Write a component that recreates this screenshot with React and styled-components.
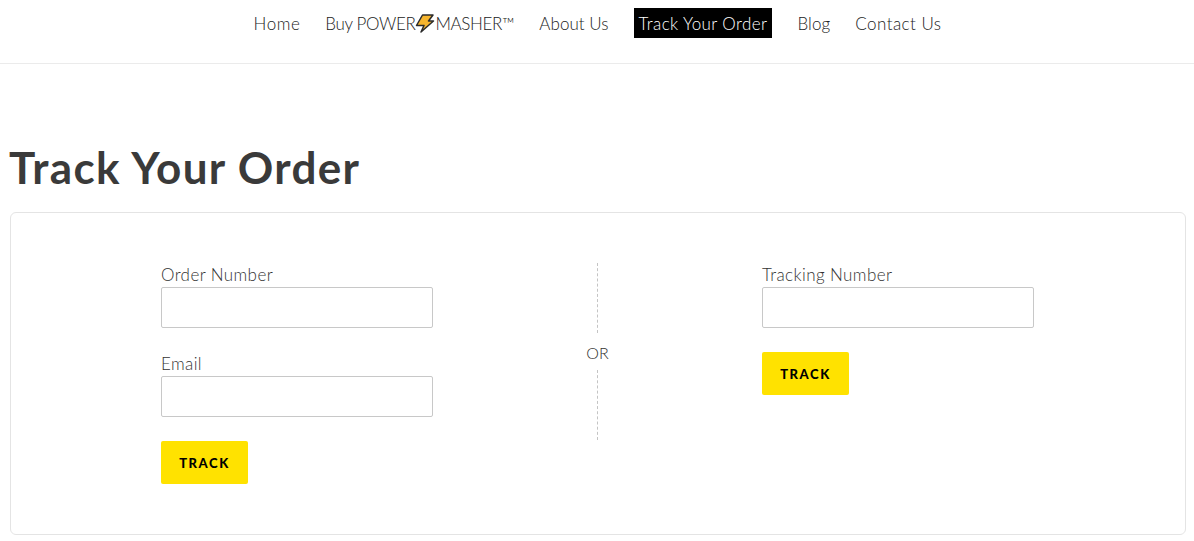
import React from "react";
import styled, { createGlobalStyle } from "styled-components";

const GlobalStyle = createGlobalStyle`
  html, body {
    margin: 0;
    padding: 0;
    background: #fff;
    font-family: "Lato", "Liberation Sans", sans-serif;
    color: #3a3a3a;
  }
  * {
    box-sizing: border-box;
  }
`;

const navItems = [
  { label: "Home", spacing: 0.55 },
  { label: "Buy", spacing: -0.35 },
  { label: "About Us", spacing: 0.05 },
  { label: "Track Your Order", spacing: 0.4, active: true },
  { label: "Blog", spacing: 0.1 },
  { label: "Contact Us", spacing: 0.45 },
];

const Bolt = () => (
  <BoltIcon viewBox="0 0 20 20" aria-hidden="true">
    <path
      d="M7.5 2 H18 L13.5 8 H18.5 L6 19 L9 12.5 H1.5 Z"
      fill="#f6b52e"
      stroke="#2b2b2b"
      strokeWidth="1.5"
      strokeLinejoin="round"
    />
  </BoltIcon>
);

const App = () => {
  return (
    <>
      <GlobalStyle />
      <Header>
        <Nav>
          {navItems.map((item) => (
            <NavLink key={item.label} $active={item.active} $spacing={item.spacing}>
              {item.label === "Buy" ? (
                <>
                  Buy POWER
                  <Bolt />
                  MASHER™
                </>
              ) : (
                item.label
              )}
            </NavLink>
          ))}
        </Nav>
      </Header>
      <Main>
        <Title>Track Your Order</Title>
        <Card>
          <Column>
            <Field>
              <Label>Order Number</Label>
              <Input type="text" />
            </Field>
            <Field>
              <Label>Email</Label>
              <Input type="text" />
            </Field>
            <TrackButton>TRACK</TrackButton>
          </Column>
          <Divider>
            <DashLine />
            <OrText>OR</OrText>
            <DashLine />
          </Divider>
          <Column>
            <Field>
              <Label>Tracking Number</Label>
              <Input type="text" />
            </Field>
            <TrackButton>TRACK</TrackButton>
          </Column>
        </Card>
      </Main>
    </>
  );
};

const Header = styled.header`
  height: 64px;
  border-bottom: 1px solid #ebebeb;
  padding-top: 8px;
`;

const Nav = styled.nav`
  display: flex;
  justify-content: center;
  gap: 25px;
  padding-left: 1px;
`;

const NavLink = styled.a`
  display: flex;
  align-items: center;
  height: 30px;
  padding: 0 ${(p) => (p.$active ? "5px" : "0")};
  font-size: 17px;
  font-weight: 300;
  letter-spacing: ${(p) => p.$spacing}px;
  white-space: nowrap;
  color: ${(p) => (p.$active ? "#fff" : "#222")};
  background: ${(p) => (p.$active ? "#000" : "transparent")};
`;

const BoltIcon = styled.svg`
  width: 20px;
  height: 20px;
  flex-shrink: 0;
`;

const Main = styled.main`
  padding: 0 8px 0 10px;
`;

const Title = styled.h1`
  margin: 0;
  padding-top: 76px;
  margin-left: -1px;
  height: 148px;
  font-size: 44px;
  line-height: 54px;
  font-weight: 700;
  letter-spacing: 1.35px;
  color: #3a3a3a;
`;

const Card = styled.section`
  display: grid;
  grid-template-columns: 272px 1fr 272px;
  height: 323px;
  padding: 50px 151px 50px 150px;
  border: 1px solid #e4e4e4;
  border-radius: 6px;
`;

const Column = styled.div`
  display: flex;
  flex-direction: column;
  align-items: flex-start;
`;

const Field = styled.div`
  width: 100%;
  margin-bottom: 24px;
`;

const Label = styled.label`
  display: block;
  height: 24px;
  font-size: 17px;
  font-weight: 300;
  line-height: 23px;
  letter-spacing: 0.4px;
  color: #333;
`;

const Input = styled.input`
  display: block;
  width: 100%;
  height: 41px;
  border: 1px solid #c8c8c8;
  border-radius: 2px;
  background: #fff;
  outline: none;
`;

const TrackButton = styled.button`
  width: 87px;
  height: 43px;
  border: none;
  border-radius: 2px;
  background: #ffe200;
  color: #000;
  font-family: "Lato", "Liberation Sans", sans-serif;
  font-size: 13px;
  font-weight: 900;
  letter-spacing: 1.6px;
`;

const Divider = styled.div`
  display: flex;
  flex-direction: column;
  align-items: center;
  height: 177px;
`;

const DashLine = styled.div`
  width: 0;
  height: 70px;
  border-left: 1px dashed #c4c4c4;
`;

const OrText = styled.span`
  height: 37px;
  font-size: 16px;
  font-weight: 300;
  line-height: 40px;
  color: #333;
`;

export default App;
